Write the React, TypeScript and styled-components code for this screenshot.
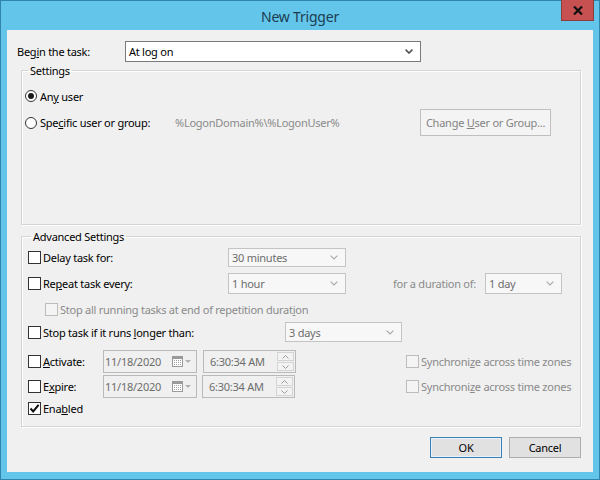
import React from 'react';
import styled, { createGlobalStyle } from 'styled-components';

const GlobalStyle = createGlobalStyle`
  html, body {
    margin: 0;
    padding: 0;
    background: #ffffff;
  }
  * {
    box-sizing: border-box;
  }
`;

const UI_FONT = `"Noto Sans", "Open Sans", "Liberation Sans", sans-serif`;

const Window = styled.div`
  width: 600px;
  height: 480px;
  background: #63c5e9;
  border: 1px solid #2f86ad;
  display: flex;
  flex-direction: column;
  font-family: ${UI_FONT};
  font-size: 11px;
  letter-spacing: -0.25px;
  color: #000;
`;

const TitleBar = styled.div`
  position: relative;
  height: 29px;
  display: flex;
  align-items: center;
  justify-content: center;
  flex-shrink: 0;
`;

const Title = styled.div`
  font-size: 14px;
  letter-spacing: -0.2px;
  color: #1b3d52;
  padding-top: 1px;
`;

const CloseButton = styled.div`
  position: absolute;
  top: -1px;
  right: 5px;
  width: 33px;
  height: 21px;
  background: #c75050;
  border: 1px solid #8f3b3b;
  border-top: none;
  display: flex;
  align-items: center;
  justify-content: center;
`;

const Client = styled.div`
  flex: 1;
  margin: 0 6px 7px 6px;
  background: #f0f0f0;
  padding: 11px 12px 0 10px;
  display: flex;
  flex-direction: column;
`;

const TopRow = styled.div`
  display: flex;
  align-items: center;
  height: 21px;
`;

const Label = styled.span<{ $w?: number; $muted?: boolean }>`
  display: inline-block;
  width: ${(p) => (p.$w ? `${p.$w}px` : 'auto')};
  flex-shrink: 0;
  white-space: nowrap;
  color: ${(p) => (p.$muted ? '#8a8a8a' : '#000')};
`;

const Key = styled.span`
  text-decoration: underline;
  text-underline-offset: 1px;
`;

const Combo = styled.div<{ $w: number; $h?: number; $enabled?: boolean }>`
  width: ${(p) => p.$w}px;
  height: ${(p) => p.$h ?? 20}px;
  flex-shrink: 0;
  background: ${(p) => (p.$enabled ? '#ffffff' : '#f7f7f7')};
  border: 1px solid ${(p) => (p.$enabled ? '#7a7a7a' : '#c4c4c4')};
  color: ${(p) => (p.$enabled ? '#000' : '#6d6d6d')};
  display: flex;
  align-items: center;
  justify-content: space-between;
  padding: 0 7px 0 3px;
  white-space: nowrap;
`;

const Group = styled.fieldset<{ $h: number; $pl: number; $mt?: number }>`
  margin: ${(p) => p.$mt ?? 1}px 0 0 4px;
  height: ${(p) => p.$h}px;
  border: 1px solid #d5d5d5;
  box-shadow: inset 1px 1px 0 #ffffff, 1px 1px 0 #ffffff;
  padding: 0 0 0 ${(p) => p.$pl}px;
  min-width: 0;
  display: flex;
  flex-direction: column;
`;

const Legend = styled.legend`
  padding: 0 2px;
  margin-left: 3px;
  line-height: 15px;
`;

const Row = styled.div<{ $h: number; $mt?: number }>`
  display: flex;
  align-items: center;
  height: ${(p) => p.$h}px;
  margin-top: ${(p) => p.$mt ?? 0}px;
  flex-shrink: 0;
`;

const Choice = styled.label<{ $w?: number; $ml?: number }>`
  display: flex;
  align-items: center;
  gap: 2px;
  width: ${(p) => (p.$w ? `${p.$w}px` : 'auto')};
  margin-left: ${(p) => p.$ml ?? 0}px;
  flex-shrink: 0;
  white-space: nowrap;
`;

const Box = styled.span<{ $disabled?: boolean }>`
  width: 13px;
  height: 13px;
  flex-shrink: 0;
  border: 1px solid ${(p) => (p.$disabled ? '#bcbcbc' : '#333333')};
  background: ${(p) => (p.$disabled ? '#f4f4f4' : '#ffffff')};
  display: flex;
  align-items: center;
  justify-content: center;
`;

const Radio = styled.span`
  width: 12px;
  height: 12px;
  flex-shrink: 0;
  border: 1px solid #333333;
  border-radius: 50%;
  background: #ffffff;
  display: flex;
  align-items: center;
  justify-content: center;
  margin-right: 1px;
`;

const Dot = styled.span`
  width: 6px;
  height: 6px;
  border-radius: 50%;
  background: #1a1a1a;
`;

const PushButton = styled.div<{ $w: number; $h: number; $variant?: 'default' | 'disabled' | 'normal' }>`
  width: ${(p) => p.$w}px;
  height: ${(p) => p.$h}px;
  flex-shrink: 0;
  display: flex;
  align-items: center;
  justify-content: center;
  white-space: nowrap;
  border: 1px solid
    ${(p) => (p.$variant === 'default' ? '#3c7fb1' : p.$variant === 'disabled' ? '#bfbfbf' : '#adadad')};
  background: ${(p) => (p.$variant === 'disabled' ? '#f4f4f4' : '#e1e1e1')};
  color: ${(p) => (p.$variant === 'disabled' ? '#838383' : '#000')};
  box-shadow: ${(p) => (p.$variant === 'default' ? 'inset 0 0 0 1px #e5f1fb' : 'none')};
`;

const DateField = styled.div<{ $w: number; $ml?: number }>`
  width: ${(p) => p.$w}px;
  height: 100%;
  margin-left: ${(p) => p.$ml ?? 0}px;
  flex-shrink: 0;
  border: 1px solid #bababa;
  background: #f0f0f0;
  color: #6d6d6d;
  display: flex;
  align-items: center;
  justify-content: space-between;
  padding: 0 4px 0 1px;
`;

const TimeField = styled(DateField)`
  padding: 0 1px 0 6px;
`;

const Spinner = styled.div`
  display: flex;
  flex-direction: column;
  width: 17px;
  height: 19px;
  gap: 1px;
`;

const SpinPart = styled.div`
  flex: 1;
  border: 1px solid #d4d4d4;
  background: #f3f3f3;
  display: flex;
  align-items: center;
  justify-content: center;
`;

const Spacer = styled.div<{ $w: number }>`
  width: ${(p) => p.$w}px;
  flex-shrink: 0;
`;

const Footer = styled.div`
  display: flex;
  justify-content: flex-end;
  gap: 7px;
  margin-top: 10px;
`;

const Chevron = ({ enabled }: { enabled?: boolean }) => (
  <svg width="8" height="5" viewBox="0 0 8 5">
    <path
      d="M0.6 0.6 L4 4 L7.4 0.6"
      fill="none"
      stroke={enabled ? '#505050' : '#a8a8a8'}
      strokeWidth={enabled ? 1.6 : 1.1}
    />
  </svg>
);

const Check = () => (
  <svg width="11" height="11" viewBox="0 0 11 11">
    <path d="M1.5 5.5 L4.2 8.4 L9.6 1.8" fill="none" stroke="#111" strokeWidth="2" />
  </svg>
);

const CalendarIcon = () => (
  <svg width="20" height="11" viewBox="0 0 20 11">
    <rect x="0.5" y="0.5" width="10" height="10" fill="#ffffff" stroke="#9a9a9a" />
    <rect x="1" y="1" width="9" height="2" fill="#9a9a9a" />
    {[0, 1, 2].map((r) =>
      [0, 1, 2, 3].map((c) => (
        <rect key={`${r}-${c}`} x={2 + c * 2} y={4 + r * 2} width="1" height="1" fill="#a0a0a0" />
      ))
    )}
    <path d="M13 4 L19 4 L16 7 Z" fill="#b0b0b0" />
  </svg>
);

const Arrow = ({ up }: { up?: boolean }) => (
  <svg width="7" height="4" viewBox="0 0 7 4">
    <path d={up ? 'M0.5 3.5 L3.5 0.5 L6.5 3.5' : 'M0.5 0.5 L3.5 3.5 L6.5 0.5'} fill="none" stroke="#9a9a9a" />
  </svg>
);

const CloseGlyph = () => (
  <svg width="10" height="9" viewBox="0 0 10 9">
    <path d="M1 0.5 L9 8.5 M9 0.5 L1 8.5" stroke="#111" strokeWidth="2.2" />
  </svg>
);

const CheckBox = ({ checked, disabled }: { checked?: boolean; disabled?: boolean }) => (
  <Box $disabled={disabled}>{checked && <Check />}</Box>
);

const DateTimeRow = ({
  label,
  mt,
  timeOffset,
}: {
  label: React.ReactNode;
  mt: number;
  timeOffset: number;
}) => (
  <Row $h={23} $mt={mt}>
    <Choice $w={75}>
      <CheckBox />
      <Label>{label}</Label>
    </Choice>
    <DateField $w={94}>
      <span>11/18/2020</span>
      <CalendarIcon />
    </DateField>
    <TimeField $w={93} $ml={timeOffset}>
      <span>6:30:34 AM</span>
      <Spinner>
        <SpinPart>
          <Arrow up />
        </SpinPart>
        <SpinPart>
          <Arrow />
        </SpinPart>
      </Spinner>
    </TimeField>
    <Choice $ml={110 - timeOffset + 6}>
      <CheckBox disabled />
      <Label $muted>
        Synchroni<Key>z</Key>e across time zones
      </Label>
    </Choice>
  </Row>
);

const App = () => (
  <>
    <GlobalStyle />
    <Window>
      <TitleBar>
        <Title>New Trigger</Title>
        <CloseButton>
          <CloseGlyph />
        </CloseButton>
      </TitleBar>
      <Client>
        <TopRow>
          <Label $w={108}>
            Beg<Key>i</Key>n the task:
          </Label>
          <Combo $w={296} $h={21} $enabled>
            <span>At log on</span>
            <Chevron enabled />
          </Combo>
        </TopRow>

        <Group $h={162} $pl={3}>
          <Legend>Settings</Legend>
          <Row $h={20} $mt={8}>
            <Choice>
              <Radio>
                <Dot />
              </Radio>
              <Label>
                An<Key>y</Key> user
              </Label>
            </Choice>
          </Row>
          <Row $h={27} $mt={3}>
            <Choice $w={150}>
              <Radio />
              <Label>
                Spe<Key>c</Key>ific user or group:
              </Label>
            </Choice>
            <Label $w={245} $muted>
              %LogonDomain%\%LogonUser%
            </Label>
            <PushButton $w={131} $h={27} $variant="disabled">
              <span>
                Change <Key>U</Key>ser or Group...
              </span>
            </PushButton>
          </Row>
        </Group>

        <Group $h={198} $pl={6} $mt={4}>
          <Legend>Advanced Settings</Legend>
          <Row $h={26}>
            <Choice $w={200}>
              <CheckBox />
              <Label>Delay task for:</Label>
            </Choice>
            <Combo $w={118} $h={19}>
              <span>30 minutes</span>
              <Chevron />
            </Combo>
          </Row>
          <Row $h={26}>
            <Choice $w={200}>
              <CheckBox />
              <Label>
                Re<Key>p</Key>eat task every:
              </Label>
            </Choice>
            <Combo $w={118} $h={21}>
              <span>1 hour</span>
              <Chevron />
            </Combo>
            <Spacer $w={47} />
            <Label $w={92} $muted>
              for a duration of:
            </Label>
            <Combo $w={77} $h={21}>
              <span>1 day</span>
              <Chevron />
            </Combo>
          </Row>
          <Row $h={26}>
            <Choice $ml={17}>
              <CheckBox disabled />
              <Label $muted>
                Stop all running tasks at end of repetition durat<Key>i</Key>on
              </Label>
            </Choice>
          </Row>
          <Row $h={20}>
            <Choice $w={257}>
              <CheckBox />
              <Label>
                Stop task if it runs <Key>l</Key>onger than:
              </Label>
            </Choice>
            <Combo $w={117} $h={20}>
              <span>3 days</span>
              <Chevron />
            </Combo>
          </Row>
          <DateTimeRow
            mt={8}
            timeOffset={6}
            label={
              <>
                <Key>A</Key>ctivate:
              </>
            }
          />
          <DateTimeRow
            mt={2}
            timeOffset={5}
            label={
              <>
                E<Key>x</Key>pire:
              </>
            }
          />
          <Row $h={20}>
            <Choice>
              <CheckBox checked />
              <Label>
                Ena<Key>b</Key>led
              </Label>
            </Choice>
          </Row>
        </Group>

        <Footer>
          <PushButton $w={72} $h={21} $variant="default">
            OK
          </PushButton>
          <PushButton $w={72} $h={21}>
            Cancel
          </PushButton>
        </Footer>
      </Client>
    </Window>
  </>
);

export default App;
